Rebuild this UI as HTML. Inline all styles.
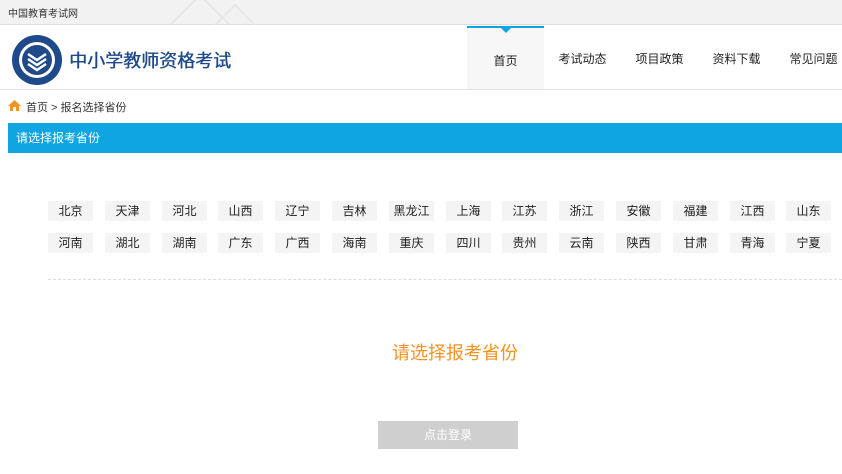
<!DOCTYPE html>
<html><head><meta charset="utf-8"><style>
*{margin:0;padding:0;box-sizing:border-box}
body{width:842px;height:474px;background:#fff;font-family:"Liberation Sans","Noto Sans CJK SC",sans-serif;color:#333;position:relative;overflow:hidden;font-size:12px}
.abs{position:absolute}
.top{left:0;top:0;width:842px;height:25px;background:#f2f2f2;border-bottom:1px solid #ddd}
.top span{position:absolute;left:8px;top:5px;font-size:10px;color:#333}
.hdr{left:0;top:89px;width:842px;height:1px;background:#e2e2e2}
.nav{top:26px;height:63px;width:77px;text-align:center;line-height:66px;font-size:12px;color:#222}
.nav.on{background:#f7f7f7;border-top:2px solid #0ea5e2}
.p{width:45px;height:20px;background:#f4f4f4;text-align:center;line-height:20px;font-size:12px;color:#222}
</style></head><body>
<div class="abs top"><span>中国教育考试网</span>
<svg class="abs" style="left:170px;top:0" width="90" height="25"><path d="M0 25 L30 -5 L60 25 M45 25 L65 5 L85 25" stroke="#e6e6e6" stroke-width="2" fill="none"/></svg></div>
<svg class="abs" style="left:11px;top:34px" width="52" height="52" viewBox="0 0 52 52">
<circle cx="26" cy="26" r="25" fill="#1f4a8a"/><circle cx="26" cy="26" r="18" fill="#fff"/><circle cx="26" cy="26" r="15" fill="#1f4a8a"/>
<path d="M17 20 L26 26 L35 20 M17 25 L26 31 L35 25 M17 30 L26 36 L35 30" stroke="#fff" stroke-width="2.5" fill="none"/></svg>
<div class="abs" style="left:69px;top:47px;font-size:18px;font-weight:normal;color:#1f4a8a;text-shadow:0.5px 0 0 #1f4a8a">中小学教师资格考试</div>
<div class="abs nav on" style="left:467px">首页</div>
<svg class="abs" style="left:500px;top:27px" width="12" height="6"><path d="M0 0 L12 0 L6 6Z" fill="#0ea5e2"/></svg>
<div class="abs nav" style="left:544px">考试动态</div>
<div class="abs nav" style="left:621px">项目政策</div>
<div class="abs nav" style="left:698px">资料下载</div>
<div class="abs nav" style="left:775px">常见问题</div>
<div class="abs hdr"></div>
<svg class="abs" style="left:8px;top:100px" width="13" height="11"><path d="M6.5 0 L13 6 L11 6 L11 11 L8 11 L8 7 L5 7 L5 11 L2 11 L2 6 L0 6Z" fill="#f39323"/></svg>
<div class="abs" style="left:26px;top:99px;font-size:11px;color:#333">首页 &gt; 报名选择省份</div>
<div class="abs" style="left:8px;top:123px;width:834px;height:30px;background:#0ea5e2;color:#fff;font-size:12px;line-height:30px;padding-left:8px">请选择报考省份</div>
<div id="g"></div>
<div class="abs" style="left:48px;top:279px;width:794px;border-top:1px dashed #ddd"></div>
<div class="abs" style="left:392px;top:339px;font-size:18px;color:#f39323">请选择报考省份</div>
<div class="abs" style="left:378px;top:421px;width:140px;height:28px;background:#cfcfcf;color:#fff;text-align:center;line-height:28px;font-size:12px">点击登录</div>
<script>
var a="北京 天津 河北 山西 辽宁 吉林 黑龙江 上海 江苏 浙江 安徽 福建 江西 山东".split(" "),b="河南 湖北 湖南 广东 广西 海南 重庆 四川 贵州 云南 陕西 甘肃 青海 宁夏".split(" "),h="";
[a,b].forEach(function(r,j){r.forEach(function(t,i){h+='<div class="abs p" style="left:'+(48+i*56.8).toFixed(0)+'px;top:'+(201+j*32)+'px">'+t+'</div>'})});
document.getElementById("g").innerHTML=h;
</script>
</body></html>
